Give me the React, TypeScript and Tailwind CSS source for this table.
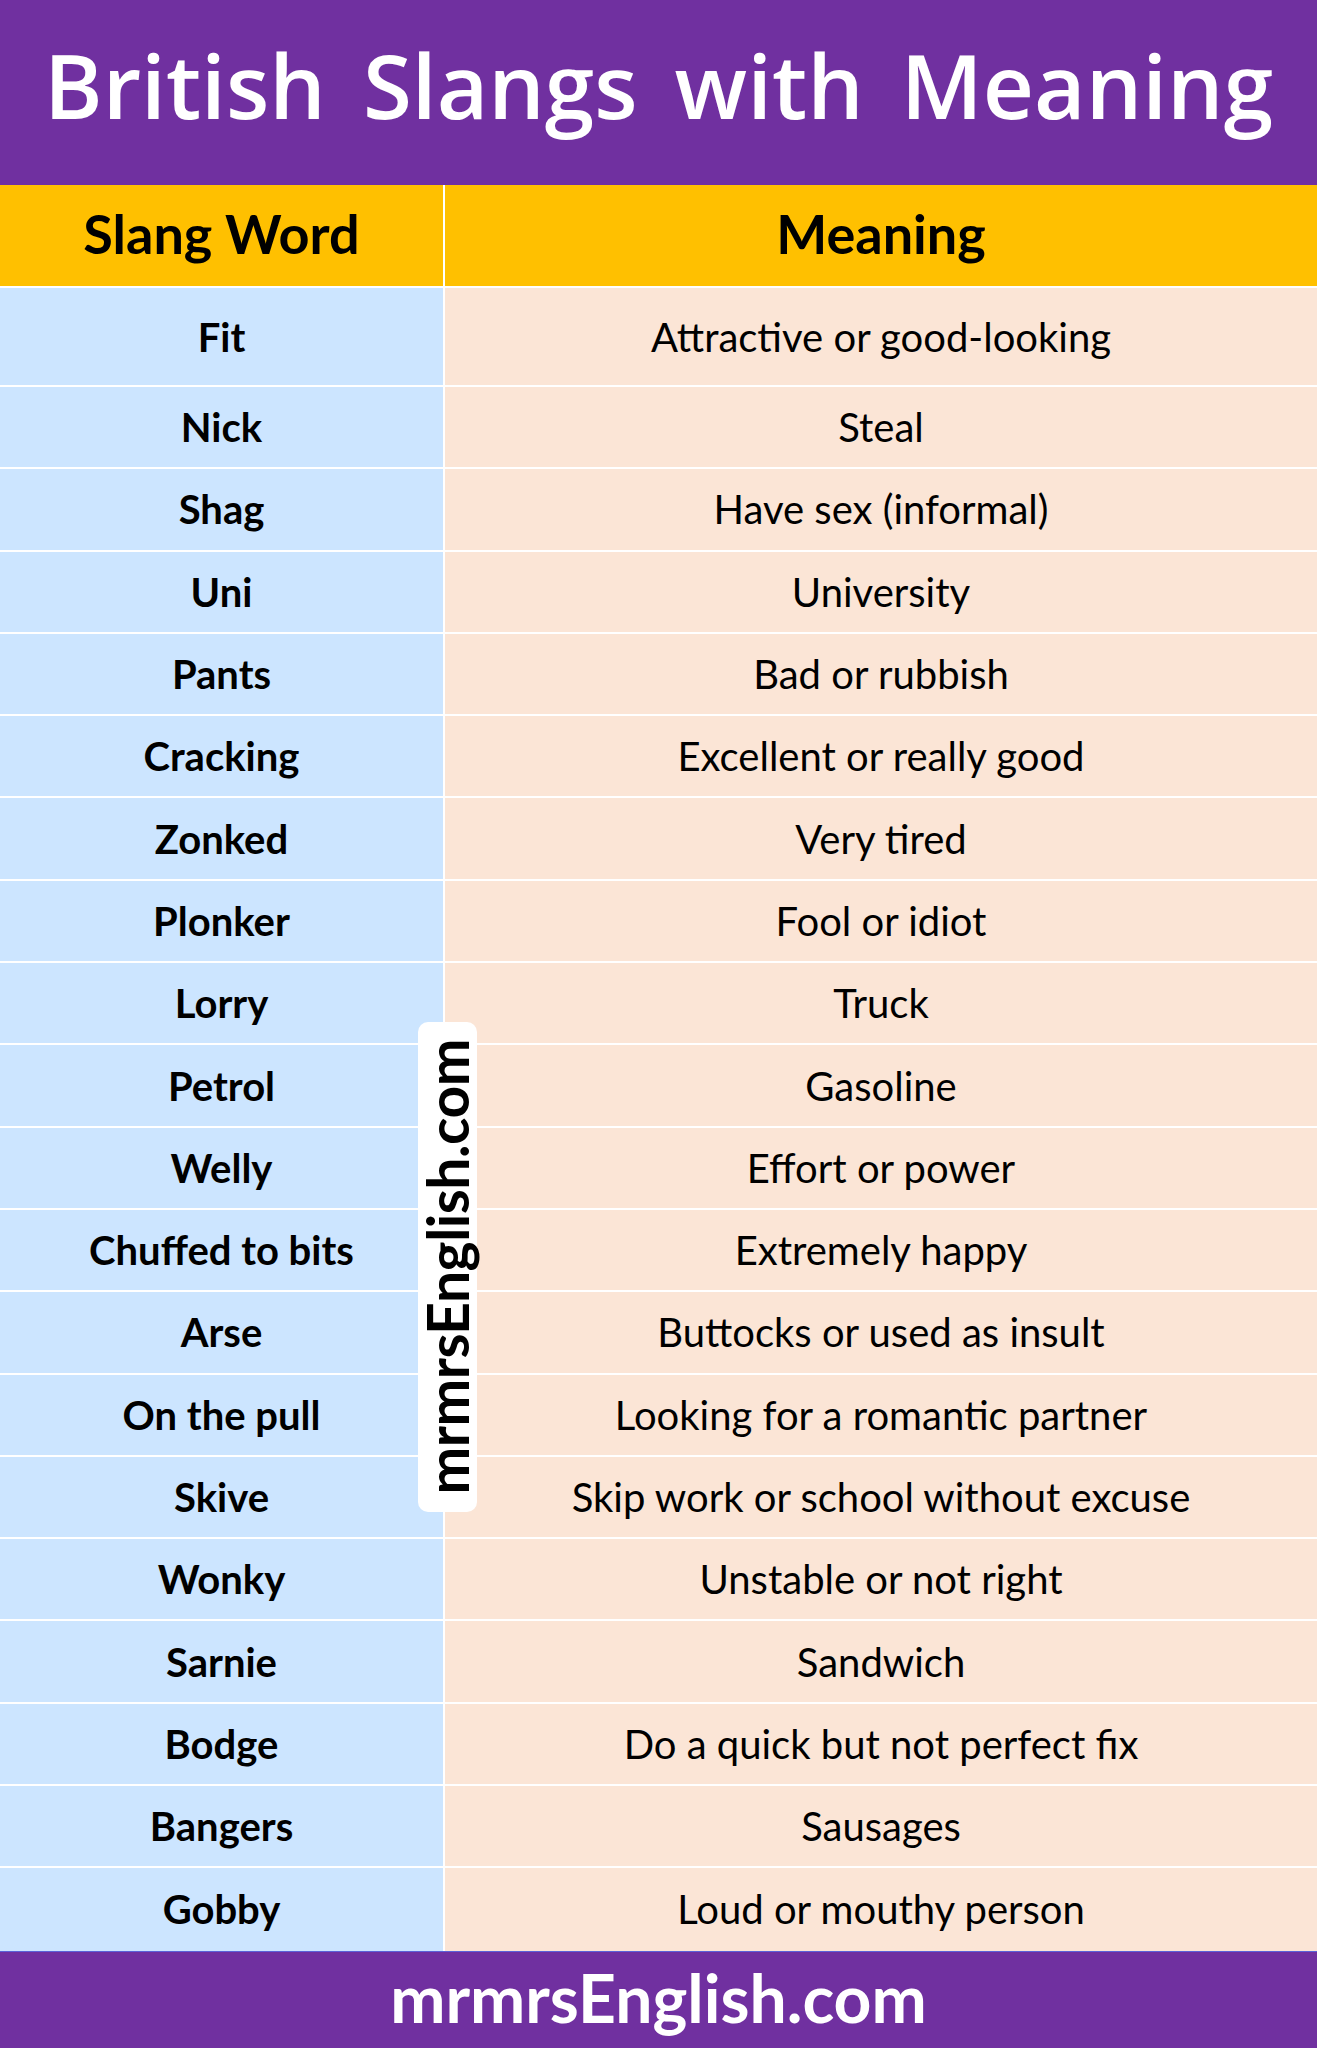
import React from "react";

const rows: [string, string][] = [
  ["Fit", "Attractive or good-looking"],
  ["Nick", "Steal"],
  ["Shag", "Have sex (informal)"],
  ["Uni", "University"],
  ["Pants", "Bad or rubbish"],
  ["Cracking", "Excellent or really good"],
  ["Zonked", "Very tired"],
  ["Plonker", "Fool or idiot"],
  ["Lorry", "Truck"],
  ["Petrol", "Gasoline"],
  ["Welly", "Effort or power"],
  ["Chuffed to bits", "Extremely happy"],
  ["Arse", "Buttocks or used as insult"],
  ["On the pull", "Looking for a romantic partner"],
  ["Skive", "Skip work or school without excuse"],
  ["Wonky", "Unstable or not right"],
  ["Sarnie", "Sandwich"],
  ["Bodge", "Do a quick but not perfect fix"],
  ["Bangers", "Sausages"],
  ["Gobby", "Loud or mouthy person"],
];

export default function App() {
  return (
    <div className="relative w-[1317px] h-[2048px] flex flex-col overflow-hidden font-['Lato','Open_Sans',sans-serif] text-black">
      <div className="h-[185px] bg-[#7030A0] flex items-center justify-center pb-[16px]">
        <h1 className="text-white font-['Comic_Sans_MS','Open_Sans',sans-serif] font-semibold text-[89px] leading-none [word-spacing:14px]">
          British Slangs with Meaning
        </h1>
      </div>
      <div className="h-[103px] flex border-b-2 border-white bg-[#FFC000]">
        <div className="w-[445px] border-r-2 border-white flex items-center justify-center text-[54px] font-bold pb-[4px]">
          Slang Word
        </div>
        <div className="flex-1 flex items-center justify-center text-[54px] font-bold pb-[4px]">
          Meaning
        </div>
      </div>
      {rows.map(([w, m], i) => (
        <div
          key={w}
          className={
            i === 0
              ? "h-[99px] flex border-b-2 border-white"
              : i === rows.length - 1
              ? "h-[82.3px] flex"
              : "h-[82.3px] flex border-b-2 border-white"
          }
        >
          <div className="w-[445px] border-r-2 border-white bg-[#CCE5FF] flex items-center justify-center text-[40px] font-bold">
            {w}
          </div>
          <div className="flex-1 bg-[#FBE5D6] flex items-center justify-center text-[40px]">
            {m}
          </div>
        </div>
      ))}
      <div className="flex-1 bg-[#7030A0] border-t border-[#5b63d8] flex items-center justify-center">
        <span className="text-white font-bold text-[66px] leading-none pb-[4px]">mrmrsEnglish.com</span>
      </div>
      <div className="absolute left-[418px] top-[1022px] w-[59px] h-[490px] bg-white rounded-[10px] flex items-center justify-center">
        <span className="[writing-mode:vertical-rl] rotate-180 font-bold text-[57px] leading-none tracking-[-0.5px]">
          mrmrsEnglish.com
        </span>
      </div>
    </div>
  );
}
